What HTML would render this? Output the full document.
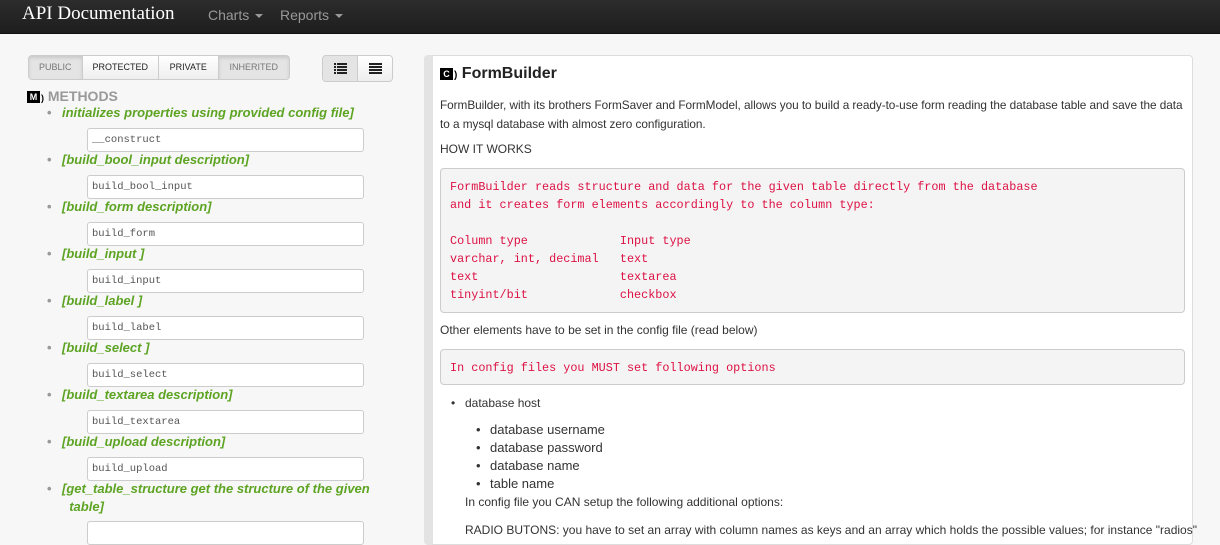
<!DOCTYPE html>
<html><head><meta charset="utf-8"><style>
*{box-sizing:border-box;margin:0;padding:0}
body{width:1220px;height:531px;overflow:hidden;background:#f7f7f7;font-family:"Liberation Sans",Arial,sans-serif;color:#333;position:relative}
.nav{position:absolute;left:0;top:0;width:1220px;height:34px;background:linear-gradient(#2c2c2c,#1e1e1e);border-bottom:1px solid #111}
.brand{position:absolute;left:22px;top:3px;font-family:"Liberation Serif",serif;font-size:19px;color:#fff}
.nl{position:absolute;top:7px;font-size:14px;color:#999}
.caret{display:inline-block;width:0;height:0;border-left:4px solid transparent;border-right:4px solid transparent;border-top:4px solid #999;vertical-align:middle;margin-left:6px}
.grp{position:absolute;left:28px;top:55px;height:25px;width:262px;display:flex;border:1px solid #ccc;border-radius:4px;overflow:hidden;font-size:9px}
.grp div{line-height:23px;border-right:1px solid #ccc;background:linear-gradient(#fff,#eee);color:#222;text-align:center}
.grp div.on{background:#e4e4e4;color:#777;box-shadow:inset 0 2px 3px rgba(0,0,0,.12)}
.grp div:last-child{border-right:0}
.ig{position:absolute;left:322px;top:55px;width:71px;height:27px;border:1px solid #ccc;border-radius:4px;display:flex;overflow:hidden}
.ig div{flex:1;display:flex;align-items:center;justify-content:center;background:linear-gradient(#fff,#eee)}
.ig div.on{background:#e4e4e4;border-right:1px solid #ccc}
.mh{position:absolute;left:27px;top:88px;font-size:14px;font-weight:bold;color:#999}
.badge{display:inline-block;background:#000;color:#fff;font-size:9px;width:13px;height:12px;text-align:center;line-height:12px;vertical-align:1px;margin-right:1px}
.it{position:absolute;left:62px;font-size:13px;font-weight:bold;font-style:italic;color:#5da423;line-height:18px}
.it:before{content:"•";position:absolute;left:-15px;color:#999;font-style:normal}
.cb{position:absolute;left:87px;width:277px;height:24px;border:1px solid #ccc;border-radius:3px;background:#fff;font-family:"Liberation Mono",monospace;font-size:10.5px;color:#555;padding-left:4px;line-height:22px}
.panel{position:absolute;left:424px;top:55px;width:769px;height:490px;background:#fff;border:1px solid #ddd;border-left:9px solid #e3e3e3;border-radius:4px}
.ct{position:absolute;left:440px;font-size:12px;color:#333}
.pre{position:absolute;left:440px;width:745px;background:#f4f4f4;border:1px solid #ccc;border-radius:4px;font-family:"Liberation Mono",monospace;font-size:11.8px;color:#dd1144;line-height:18px;padding:9px 9px;white-space:pre}
.li{position:absolute;font-size:13px;color:#333}
.li:before{content:"•";position:absolute;left:-14px}
</style></head><body>
<div class="nav">
<div class="brand">API Documentation</div>
<div class="nl" style="left:208px">Charts<span class="caret"></span></div>
<div class="nl" style="left:280px">Reports<span class="caret"></span></div>
</div>
<div class="grp"><div class="on" style="width:54px">PUBLIC</div><div style="width:77px">PROTECTED</div><div style="width:60px">PRIVATE</div><div class="on" style="width:71px">INHERITED</div></div>
<div class="ig"><div class="on"><svg width="13" height="11"><g fill="#222"><rect x="0" y="0" width="2" height="2"/><rect x="3" y="0" width="10" height="2"/><rect x="0" y="3" width="2" height="2"/><rect x="3" y="3" width="10" height="2"/><rect x="0" y="6" width="2" height="2"/><rect x="3" y="6" width="10" height="2"/><rect x="0" y="9" width="2" height="2"/><rect x="3" y="9" width="10" height="2"/></g></svg></div><div><svg width="13" height="11"><g fill="#222"><rect y="0" width="13" height="2"/><rect y="3" width="13" height="2"/><rect y="6" width="13" height="2"/><rect y="9" width="13" height="2"/></g></svg></div></div>
<div class="mh"><span class="badge">M</span><span style="font-size:9px;color:#000">)</span> METHODS</div>
<div class="it" style="top:104px">initializes properties using provided config file]</div>
<div class="cb" style="top:128px">__construct</div>
<div class="it" style="top:151px">[build_bool_input description]</div>
<div class="cb" style="top:175px">build_bool_input</div>
<div class="it" style="top:198px">[build_form description]</div>
<div class="cb" style="top:222px">build_form</div>
<div class="it" style="top:245px">[build_input ]</div>
<div class="cb" style="top:269px">build_input</div>
<div class="it" style="top:292px">[build_label ]</div>
<div class="cb" style="top:316px">build_label</div>
<div class="it" style="top:339px">[build_select ]</div>
<div class="cb" style="top:363px">build_select</div>
<div class="it" style="top:386px">[build_textarea description]</div>
<div class="cb" style="top:410px">build_textarea</div>
<div class="it" style="top:433px">[build_upload description]</div>
<div class="cb" style="top:457px">build_upload</div>
<div class="it" style="top:480px;width:320px">[get_table_structure get the structure of the given<br>&nbsp;&nbsp;table]</div>
<div class="cb" style="top:521px"></div>
<div class="panel"></div>
<div class="ct" style="top:65px;font-size:16px;font-weight:bold;color:#222"><span class="badge" style="font-size:9px">C</span><span style="font-size:10px;color:#000;font-weight:bold">)</span> FormBuilder</div>
<div class="ct" style="top:96px;width:750px;line-height:19px;font-size:11.8px;letter-spacing:-0.05px">FormBuilder, with its brothers FormSaver and FormModel, allows you to build a ready-to-use form reading the database table and save the data to a mysql database with almost zero configuration.</div>
<div class="ct" style="top:142px">HOW IT WORKS</div>
<div class="pre" style="top:168px;height:145px">FormBuilder reads structure and data for the given table directly from the database
and it creates form elements accordingly to the column type:

Column type             Input type
varchar, int, decimal   text
text                    textarea
tinyint/bit             checkbox</div>
<div class="ct" style="top:323px">Other elements have to be set in the config file (read below)</div>
<div class="pre" style="top:349px;height:36px">In config files you MUST set following options</div>
<div class="li ct" style="left:465px;top:396px;font-size:12px">database host</div>
<div class="li" style="left:490px;top:422px">database username</div>
<div class="li" style="left:490px;top:440px">database password</div>
<div class="li" style="left:490px;top:458px">database name</div>
<div class="li" style="left:490px;top:476px">table name</div>
<div class="ct" style="left:465px;top:495px">In config file you CAN setup the following additional options:</div>
<div class="ct" style="left:465px;top:523px">RADIO BUTONS: you have to set an array with column names as keys and an array which holds the possible values; for instance "radios"</div>
</body></html>
